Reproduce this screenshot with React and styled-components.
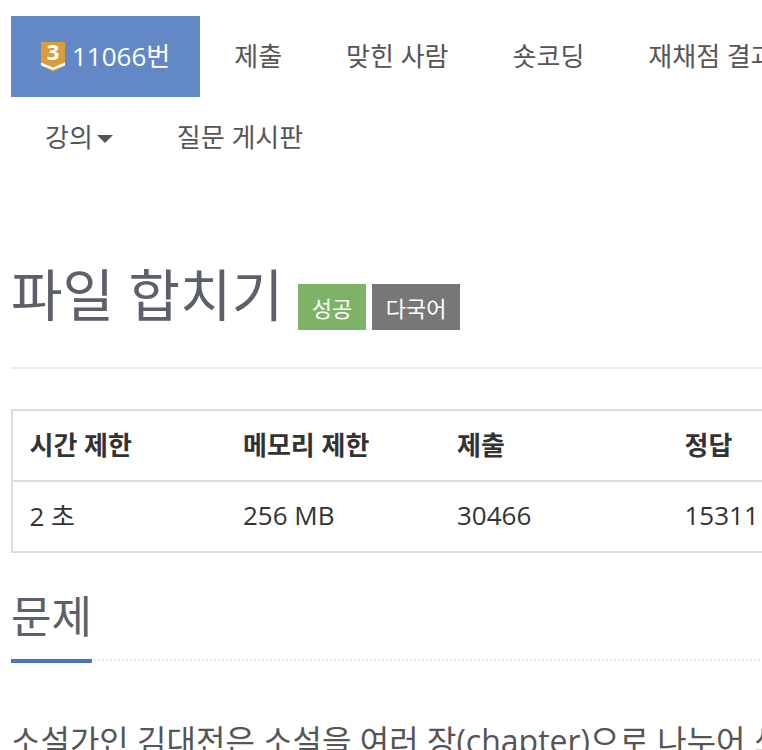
import React from 'react';
import styled, { createGlobalStyle } from 'styled-components';

const GlobalStyle = createGlobalStyle`
    html, body {
        margin: 0;
        padding: 0;
        background: #fff;
        overflow: hidden;
        height: 750px;
    }
    body {
        font-family: "Open Sans", "Noto Sans CJK KR", sans-serif;
        color: #333;
    }
`;

const tiers = ['제출', '맞힌 사람', '숏코딩', '재채점 결과', '채점 현황'];
const stats = [
    { head: '시간 제한', value: '2 초' },
    { head: '메모리 제한', value: '256 MB' },
    { head: '제출', value: '30466' },
    { head: '정답', value: '15311' },
    { head: '맞힌 사람', value: '11204' },
];

const TierBadge = () => (
    <BadgeIcon viewBox="0 0 24 30" aria-hidden="true">
        <path d="M0 0H24V23.5L12 29.5L0 23.5Z" fill="#d99e3c" />
        <path d="M0 20.5L12 25.5L24 20.5V23.5L12 28L0 23.5Z" fill="#fff" />
        <text x="12" y="18" textAnchor="middle" fontSize="22" fontWeight="700" fill="#fff" fontFamily="Open Sans">3</text>
    </BadgeIcon>
);

const App = () => {
    return (
        <>
            <GlobalStyle />
            <Page>
                <Nav>
                    <NavRow>
                        <NavItem $active>
                            <TierBadge />
                            11066번
                        </NavItem>
                        {tiers.map(tab => <NavItem key={tab}>{tab}</NavItem>)}
                    </NavRow>
                    <NavRow>
                        <NavItem>강의<Caret /></NavItem>
                        <NavItem>질문 게시판</NavItem>
                    </NavRow>
                </Nav>
                <TitleRow>
                    <Title>파일 합치기</Title>
                    <Label $color="#7cb366">성공</Label>
                    <Label $color="#777">다국어</Label>
                </TitleRow>
                <StatsTable>
                    <thead>
                        <tr>{stats.map(s => <th key={s.head}>{s.head}</th>)}</tr>
                    </thead>
                    <tbody>
                        <tr>{stats.map(s => <td key={s.head}>{s.value}</td>)}</tr>
                    </tbody>
                </StatsTable>
                <SectionHead>
                    <SectionTitle>문제</SectionTitle>
                </SectionHead>
                <Paragraph>소설가인 김대전은 소설을 여러 장(chapter)으로 나누어 쓰는데, 각 장은 각각 다른 파일에 저장하곤 한다.</Paragraph>
            </Page>
        </>
    );
};

const Page = styled.div`
    width: 1100px;
    padding: 16px 0 0 11px;
`;

const Nav = styled.nav`
    display: flex;
    flex-direction: column;
`;

const NavRow = styled.div`
    display: flex;
    height: 81px;
`;

const NavItem = styled.a`
    display: flex;
    align-items: center;
    padding: 0 30px 3px ${p => (p.$active ? '30px' : '34px')};
    font-size: 26px;
    white-space: nowrap;
    color: ${p => (p.$active ? '#fff' : '#555')};
    background: ${p => (p.$active ? '#6289c6' : 'transparent')};
`;

const BadgeIcon = styled.svg`
    width: 24px;
    height: 30px;
    margin-right: 7px;
    margin-top: 3px;
`;

const Caret = styled.span`
    width: 0;
    height: 0;
    margin-left: 4px;
    margin-top: 6px;
    border-top: 8px solid #555;
    border-left: 8px solid transparent;
    border-right: 8px solid transparent;
`;

const TitleRow = styled.div`
    display: flex;
    align-items: flex-end;
    gap: 6px;
    width: 1089px;
    height: 125px;
    margin-top: 66px;
    padding-bottom: 37px;
    box-sizing: border-box;
    border-bottom: 2px solid #eee;
`;

const Title = styled.h1`
    margin: 0 9px -2px 0;
    font-size: 56px;
    line-height: 76px;
    font-weight: 400;
    color: #5c6068;
`;

const Label = styled.span`
    display: flex;
    align-items: center;
    height: 46px;
    padding: 0 13.7px;
    font-size: 22px;
    color: #fff;
    background: ${p => p.$color};
`;

const StatsTable = styled.table`
    width: 1089px;
    margin-top: 40px;
    table-layout: fixed;
    border-collapse: separate;
    border-spacing: 0;
    border: 2px solid #ddd;
    font-size: 26px;
    color: #333;
    th, td {
        padding: 0 16.5px 3px;
        text-align: left;
        box-sizing: border-box;
    }
    th {
        height: 71px;
        font-weight: 700;
        border-bottom: 2px solid #ddd;
    }
    td {
        height: 69px;
    }
    th:nth-child(1) {
        width: 213.5px;
    }
    th:nth-child(2) {
        width: 214px;
    }
    th:nth-child(3) {
        width: 227.5px;
    }
`;

const SectionHead = styled.div`
    width: 1089px;
    margin-top: 28px;
    border-bottom: 2px dotted #e4e4e4;
    height: 80px;
    box-sizing: border-box;
`;

const SectionTitle = styled.h2`
    display: inline-block;
    margin: 0;
    height: 82px;
    box-sizing: border-box;
    border-bottom: 4px solid #4a76b8;
    font-size: 44px;
    line-height: 70px;
    font-weight: 400;
    color: #5c6068;
`;

const Paragraph = styled.p`
    margin: 56px 0 0;
    font-size: 32px;
    line-height: 48px;
    white-space: nowrap;
    color: #555;
`;

export default App;
